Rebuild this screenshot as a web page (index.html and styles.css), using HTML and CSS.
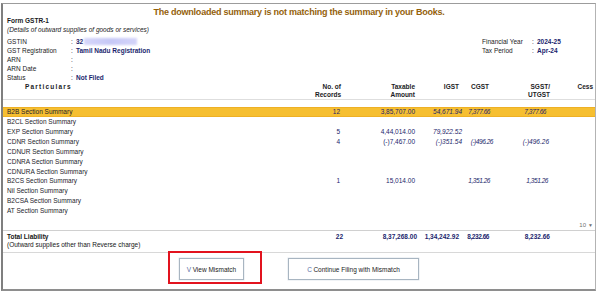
FILE: index.html
```html
<!DOCTYPE html>
<html>
<head>
<meta charset="utf-8">
<link rel="stylesheet" href="styles.css">
</head>
<body>
<div class="frame">
  <div class="title">The downloaded summary is not matching the summary in your Books.</div>
  <div class="form-name">Form GSTR-1</div>
  <div class="form-desc">(Details of outward supplies of goods or services)</div>
  <div class="info">
    <div class="info-left">
      <span>GSTIN</span><span>:</span><span class="val">32<span class="blur"></span></span>
      <span>GST Registration</span><span>:</span><span class="val">Tamil Nadu Registration</span>
      <span>ARN</span><span>:</span><span class="val"></span>
      <span>ARN Date</span><span>:</span><span class="val"></span>
      <span>Status</span><span>:</span><span class="val">Not Filed</span>
    </div>
    <div class="info-right">
      <span>Financial Year</span><span>:</span><span class="val">2024-25</span>
      <span>Tax Period</span><span>:</span><span class="val">Apr-24</span>
    </div>
  </div>

  <div class="grid thead">
    <div class="c-part">Particulars</div>
    <div class="c-rec">No. of<br>Records</div>
    <div class="c-tax">Taxable<br>Amount</div>
    <div class="c-igst">IGST</div>
    <div class="c-cgst">CGST</div>
    <div class="c-sgst">SGST/<br>UTGST</div>
    <div class="c-cess">Cess</div>
  </div>

  <div class="tbody">
    <div class="grid row sel">
      <div class="lbl">B2B Section Summary</div>
      <div class="num">12</div><div class="num">3,85,707.00</div><div class="num it">54,671.94</div><div class="num it nar">7,377.66</div><div class="num it nar s">7,377.66</div><div></div>
    </div>
    <div class="grid row"><div class="lbl">B2CL Section Summary</div></div>
    <div class="grid row">
      <div class="lbl">EXP Section Summary</div>
      <div class="num">5</div><div class="num">4,44,014.00</div><div class="num it">79,922.52</div><div></div><div></div><div></div>
    </div>
    <div class="grid row">
      <div class="lbl">CDNR Section Summary</div>
      <div class="num">4</div><div class="num">(-)7,467.00</div><div class="num it">(-)351.54</div><div class="num it nar c2">(-)496.26</div><div class="num it">(-)496.26</div><div></div>
    </div>
    <div class="grid row"><div class="lbl">CDNUR Section Summary</div></div>
    <div class="grid row"><div class="lbl">CDNRA Section Summary</div></div>
    <div class="grid row"><div class="lbl">CDNURA Section Summary</div></div>
    <div class="grid row">
      <div class="lbl">B2CS Section Summary</div>
      <div class="num">1</div><div class="num">15,014.00</div><div></div><div class="num it nar">1,351.26</div><div class="num it nar s1">1,351.26</div><div></div>
    </div>
    <div class="grid row"><div class="lbl">Nil Section Summary</div></div>
    <div class="grid row"><div class="lbl">B2CSA Section Summary</div></div>
    <div class="grid row"><div class="lbl">AT Section Summary</div></div>
  </div>

  <div class="pager">10 <span class="tri">▼</span></div>

  <div class="grid total">
    <div class="lbl"><b>Total Liability</b><br>(Outward supplies other than Reverse charge)</div>
    <div class="num b t-rec">22</div><div class="num b t-tax">8,37,268.00</div><div class="num b t-igst">1,34,242.92</div><div class="num b nar t-cgst">8,232.66</div><div class="num b t-sgst">8,232.66</div><div></div>
  </div>

  <div class="actions">
    <div class="btn-wrap">
      <div class="btn"><span class="key">V</span> View Mismatch</div>
      <div class="mark"></div>
    </div>
    <div class="btn wide"><span class="key">C</span> Continue Filing with Mismatch</div>
  </div>
</div>
</body>
</html>
```

FILE: styles.css
```css
* { box-sizing: border-box; }

body {
  margin: 0;
  background: #fff;
  font-family: "Liberation Sans", Arial, sans-serif;
  font-size: 6.5px;
  color: #1b1b24;
}

.frame {
  margin: 3px 0 0 1px;
  width: 595px;
  height: 288px;
  border-left: 2px solid #7f7f7f;
  border-top: 1px solid #9c9c9c;
  border-right: 1px solid #b3b3b3;
  border-bottom: 2px solid #8e8e8e;
  display: flex;
  flex-direction: column;
}

.title {
  padding-top: 4px;
  line-height: 8px;
  font-size: 9px;
  font-weight: bold;
  letter-spacing: -0.23px;
  text-align: center;
  color: #94610b;
}

.form-name {
  padding-left: 4px;
  line-height: 9px;
  font-weight: bold;
}

.form-desc {
  padding-left: 4px;
  line-height: 9px;
  font-style: italic;
}

.info {
  display: flex;
  margin-top: 3.25px;
  line-height: 9px;
}

.info-left {
  display: grid;
  grid-template-columns: 64px 5px auto;
  padding-left: 4px;
}

.info-right {
  margin-left: auto;
  width: 113px;
  display: grid;
  grid-template-columns: 50px 5px auto;
  align-content: start;
}

.val {
  font-weight: bold;
  color: #1b1f6e;
}

.blur {
  display: inline-block;
  width: 53px;
  height: 7px;
  margin-left: 1px;
  vertical-align: -1px;
  background: linear-gradient(90deg, #d6d6fa, #c6c8f6 50%, #d4d4fa);
  filter: blur(0.8px);
}

.grid {
  display: grid;
  grid-template-columns: 297px 40px 75px 47px 28px 59px 44px;
}

.thead {
  margin-top: 0.75px;
  line-height: 7.6px;
  font-weight: bold;
  padding-bottom: 1px;
  border-bottom: 1px solid #dedede;
}

.thead > div { text-align: right; }
.thead .c-part { text-align: left; padding-left: 22px; letter-spacing: 1.2px; }
.thead .c-rec { margin-right: -1px; }
.thead .c-igst { padding-right: 3px; }
.thead .c-cgst { padding-right: 1px; }
.thead .c-sgst { margin-right: -1px; }

.tbody { margin-top: 7px; }

.row {
  height: 9.9px;
  line-height: 9.9px;
}

.row.sel {
  background: #f6bf31;
  box-shadow: inset 0 1px 0 #eeb025, inset 0 -1px 0 #eeb025;
}

.lbl {
  padding-left: 4px;
  color: #1d1d2b;
}

.num {
  text-align: right;
  color: #22256b;
}

.it { font-style: italic; }
.nar { letter-spacing: -0.45px; }
.num.s { padding-right: 3px; }
.num.s1 { padding-right: 1px; }
.num.c2 { margin-right: -3px; }

.pager {
  height: 15.1px;
  display: flex;
  justify-content: flex-end;
  align-items: flex-end;
  padding: 0 2px 1.5px 0;
  line-height: 7px;
  font-size: 6px;
  color: #6f6f6f;
  border-bottom: 1px solid #d0d0d0;
}

.pager .tri { font-size: 5px; margin-left: 2px; }

.total {
  padding-top: 2.3px;
  padding-bottom: 2.6px;
  line-height: 7.8px;
  border-bottom: 1px solid #d8d8d8;
}

.total .lbl { color: #151515; }
.num.b { font-weight: bold; color: #1b1f6e; }
.t-rec { margin-right: -3px; }
.t-tax { margin-right: -2px; }
.t-igst { padding-right: 3px; }
.t-cgst { padding-right: 1px; }
.t-sgst { margin-right: -1px; }

.actions {
  display: flex;
  justify-content: center;
  gap: 44px;
  padding-top: 5.5px;
}

.btn-wrap { position: relative; }

.btn {
  width: 65px;
  height: 22px;
  border: 1px solid #a8b5c1;
  background: #fff;
  box-shadow: 0 0 0 0.5px #e2e8ee;
  display: flex;
  align-items: center;
  justify-content: center;
  color: #1a1a1a;
  white-space: nowrap;
}

.btn.wide { width: 131px; }

.key { color: #5a6ea6; margin-right: 1.5px; }

.mark {
  position: absolute;
  left: -11px;
  top: -7px;
  width: 94px;
  height: 33px;
  border: 2px solid #e2131e;
}
```
